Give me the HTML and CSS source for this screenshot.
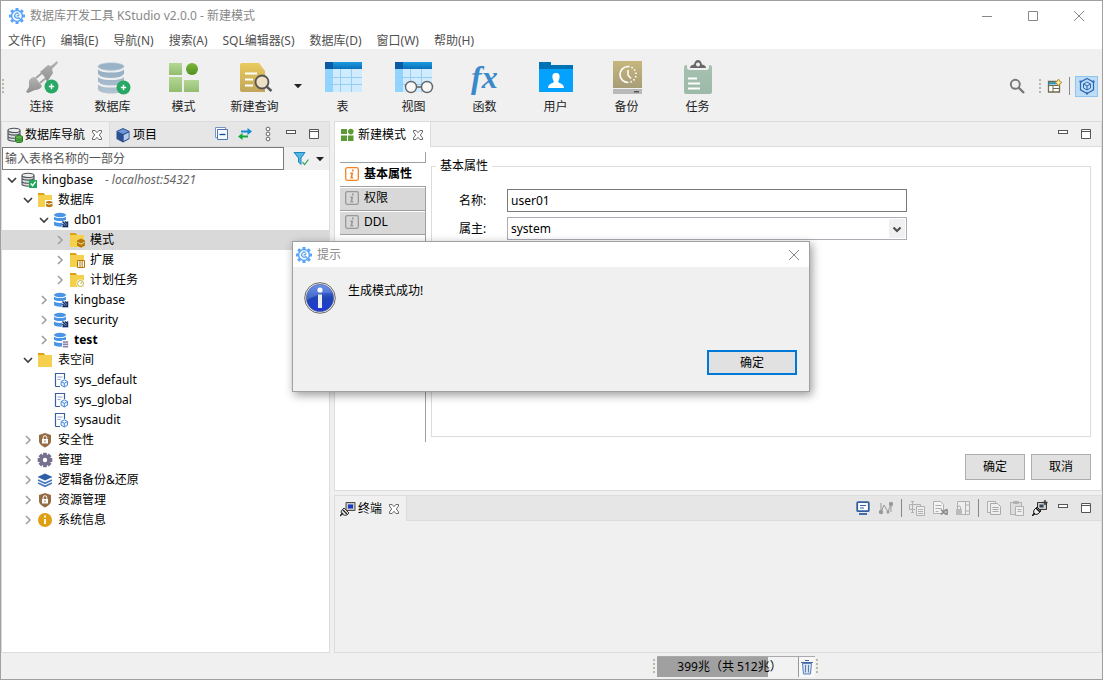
FILE: index.html
```
<!DOCTYPE html>
<html lang="zh-CN">
<head>
<meta charset="utf-8">
<meta name="viewport" content="width=device-width, initial-scale=1">
<title>数据库开发工具 KStudio v2.0.0 - 新建模式</title>
<link rel="stylesheet" href="styles.css">
</head>
<body>
<svg class="defs" aria-hidden="true">
  <defs>
    <linearGradient id="g-gray" x1="0" y1="0" x2="0" y2="1"><stop offset="0" stop-color="#b4b4b4"/><stop offset="1" stop-color="#8f8f8f"/></linearGradient>
    <linearGradient id="g-db" x1="0" y1="0" x2="0" y2="1"><stop offset="0" stop-color="#8eaac0"/><stop offset="1" stop-color="#b4c3d2"/></linearGradient>
    <linearGradient id="g-green" x1="0" y1="0" x2="0" y2="1"><stop offset="0" stop-color="#b5d795"/><stop offset="1" stop-color="#92bd70"/></linearGradient>
    <linearGradient id="g-leaf" x1="0" y1="0" x2="0" y2="1"><stop offset="0" stop-color="#7fb83c"/><stop offset="1" stop-color="#4f9020"/></linearGradient>
    <linearGradient id="g-doc" x1="0" y1="0" x2="0" y2="1"><stop offset="0" stop-color="#e9ca5c"/><stop offset="1" stop-color="#c2a55a"/></linearGradient>
    <linearGradient id="g-head" x1="0" y1="0" x2="0" y2="1"><stop offset="0" stop-color="#1b9be0"/><stop offset="1" stop-color="#0a6fb8"/></linearGradient>
    <linearGradient id="g-safe" x1="0" y1="0" x2="0" y2="1"><stop offset="0" stop-color="#c6b77c"/><stop offset="1" stop-color="#a79d77"/></linearGradient>
    <linearGradient id="g-task" x1="0" y1="0" x2="0" y2="1"><stop offset="0" stop-color="#a6c1b0"/><stop offset="1" stop-color="#9db9a8"/></linearGradient>
    <linearGradient id="g-info" x1="0" y1="0" x2="0" y2="1"><stop offset="0" stop-color="#5f87e6"/><stop offset=".5" stop-color="#1f45b4"/><stop offset="1" stop-color="#2038d8"/></linearGradient>
  </defs>
  <symbol id="gear" viewBox="0 0 16 16">
    <circle cx="8" cy="8" r="5.400" fill="none" stroke="#5aa4f8" stroke-width="1.500"/>
    <path d="M8 0v2.600M8 13.400v2.600M0 8h2.600M13.400 8H16M2.200 2.200l1.900 1.900M11.900 11.900l1.900 1.900M13.800 2.200l-1.900 1.900M4.100 11.900l-1.900 1.900" stroke="#5aa4f8" stroke-width="3"/>
    <path d="M9.600 5.600a2.500 2.500 0 1 0 .6 3.600M7.600 7.600a1.600 1.600 0 0 0 2.400-1.400M9.200 9.200l4.200 4.200" fill="none" stroke="#5aa4f8" stroke-width="1.300"/>
  </symbol>
  <symbol id="plus" viewBox="0 0 14 14"><circle cx="7" cy="7" r="6.500" fill="#27a866"/><path d="M7 4.500v5M4.500 7h5" stroke="#fff" stroke-width="1.300"/></symbol>
  <symbol id="close" viewBox="0 0 12 12"><path d="M1.500 1.500h2.600L6 3.700l1.900-2.200h2.600v1.600L8.300 6l2.200 2.900v1.600H7.900L6 8.300l-1.900 2.200H1.500V8.900L3.700 6 1.500 3.100z" fill="#fff" stroke="#5a5a5a" stroke-width=".9"/></symbol>
  <symbol id="min" viewBox="0 0 16 16"><rect x="3.500" y="4.500" width="9" height="3" fill="#fff" stroke="#555"/></symbol>
  <symbol id="max" viewBox="0 0 16 16"><path d="M3.500 3.500h9v9h-9zM3.500 5.500h9" fill="#fff" stroke="#555"/></symbol>
  <symbol id="down" viewBox="0 0 16 16"><path d="M4 6h8l-4 4.200z" fill="#222"/></symbol>
  <symbol id="open" viewBox="0 0 16 16"><path d="M4 6l4 4 4-4" fill="none" stroke="#404040" stroke-width="1.700"/></symbol>
  <symbol id="shut" viewBox="0 0 16 16"><path d="M6 4l4 4-4 4" fill="none" stroke="#a0a0a0" stroke-width="1.600"/></symbol>
  <symbol id="blocks" viewBox="0 0 16 16"><path d="M1 2h6v5H1zM1 8.500h6V14H1zM8 8.500h5.500V14H8z" fill="#5d9a35"/><circle cx="10.800" cy="4.600" r="2.800" fill="#5d9a35"/></symbol>
  <symbol id="stack" viewBox="0 0 16 16"><g fill="#4a94e6"><ellipse cx="7" cy="3" rx="6" ry="2.200"/><path d="M1 4.800c2 1.700 10 1.700 12 0v3c-2 1.700-10 1.700-12 0z"/><path d="M1 9.600c2 1.700 10 1.700 12 0v3.600c-2 1.900-10 1.900-12 0z"/></g></symbol>
  <symbol id="dbarrow" viewBox="0 0 16 16"><use href="#stack"/><rect x="9" y="9" width="7" height="7" fill="#dfe8f5"/><path d="M9.500 9.500l4 4M14.500 9.500v5h-5M12 9.500l2 2M9.500 12l2 2" fill="none" stroke="#172d63" stroke-width="1.300"/></symbol>
  <symbol id="dbstop" viewBox="0 0 16 16"><use href="#stack"/><path d="M9 8h7v8H9z" fill="#fff"/><path d="M9.800 10h5.400M9.800 12.400h5.400M9.800 14.800h5.400" stroke="#8681a5" stroke-width="1.600"/></symbol>
  <symbol id="server" viewBox="0 0 16 16"><g fill="#d9dcde" stroke="#50555a" stroke-width="1.100"><path d="M1 3.500v9.200c2 2 10 2 12 0V3.500"/><ellipse cx="7" cy="3.400" rx="6" ry="2.100" fill="#eee"/><path d="M1 6.600c2 2 10 2 12 0M1 9.800c2 2 10 2 12 0" fill="none"/></g></symbol>
  <symbol id="serverok" viewBox="0 0 16 16"><use href="#server"/><rect x="8" y="8" width="8" height="8" fill="#20a75a"/><path d="M9.800 11.500l1.800 2.200 3-4" stroke="#fff" stroke-width="1.300" fill="none"/></symbol>
  <symbol id="servernav" viewBox="0 0 16 16"><use href="#server"/><path d="M8.500 9.500c1-1.300 6-1.300 7 0v5c-1 1.500-6 1.500-7 0z" fill="#5fb54a" stroke="#2c7a2a"/><path d="M8.500 11.500q3.500 1.600 7 0M8.500 13.200q3.500 1.600 7 0" fill="none" stroke="#2c7a2a" stroke-width=".8"/></symbol>
  <symbol id="folder" viewBox="0 0 16 16"><path d="M1 1h5.500l1.500 2h7v12H1z" fill="#f5d04c"/><path d="M1 1h5.500l1.500 2H1z" fill="#dca010"/></symbol>
  <symbol id="folderdb" viewBox="0 0 16 16"><use href="#folder"/><path d="M8 8h8v8H8z" fill="#fff"/><path d="M9 10c1-1.500 5.500-1.500 6.500 0v4c-1 1.500-5.500 1.500-6.500 0z" fill="#b87808"/><path d="M9 11.300q3 1.800 6.500 0" fill="none" stroke="#fff"/></symbol>
  <symbol id="foldercube" viewBox="0 0 16 16"><use href="#folder"/><path d="M12 6.500l4 2v5l-4 2.200-4-2.200v-5z" fill="#b87808"/><path d="M8.500 10.200l3.500 2 3.500-2" fill="none" stroke="#f4dfa5"/></symbol>
  <symbol id="foldergrid" viewBox="0 0 16 16"><use href="#folder"/><path d="M8.500 8.500h7v7h-7zM11 8.500v7M13.200 8.500v7" fill="#fff" stroke="#b87808"/></symbol>
  <symbol id="folderclock" viewBox="0 0 16 16"><use href="#folder"/><circle cx="11.500" cy="11.500" r="4" fill="#fff"/><circle cx="11.500" cy="11.500" r="3" fill="#fff" stroke="#b9b33d"/><path d="M11.500 12l1.500-2" stroke="#b9b33d"/></symbol>
  <symbol id="space" viewBox="0 0 16 16"><path d="M2.500 14.500v-13h9V7M2.500 14.500H7" fill="none" stroke="#3b5f9e" stroke-width="1.200"/><path d="M4.500 5h5M4.500 7.500h3" stroke="#8ea5cc"/><path d="M11.300 7.800l3.200 1.700v3.700l-3.200 1.800-3.200-1.800V9.500zM8.100 9.500l3.200 1.800 3.200-1.800M11.300 11.300V15" fill="#eaf3ff" stroke="#4a8ad8"/></symbol>
  <symbol id="shield" viewBox="0 0 16 16"><path d="M8 1l6 2v6c0 3-3 5-6 6.500C5 14 2 12 2 9V3z" fill="#946b43"/><rect x="5" y="7" width="6" height="4.500" fill="#fff"/><path d="M6.200 7V5.500a1.800 1.800 0 0 1 3.600 0V7M8 8.300v2" fill="none" stroke="#fff"/><path d="M8 8.300v2" stroke="#946b43"/></symbol>
  <symbol id="cog" viewBox="0 0 16 16"><circle cx="8" cy="8" r="4" fill="none" stroke="#77718f" stroke-width="3.600"/><path d="M8 .7v3M8 12.300v3M.7 8h3M12.300 8h3M2.800 2.800l2 2M11.200 11.200l2 2M13.200 2.800l-2 2M4.800 11.200l-2 2" stroke="#77718f" stroke-width="3.800"/></symbol>
  <symbol id="layers" viewBox="0 0 16 16"><path d="M8 1.500L15.500 5 8 8.500.5 5z" fill="#2e5ea7"/><path d="M1 8l7 3.300L15 8M1 11l7 3.300 7-3.300" fill="none" stroke="#4878bd" stroke-width="1.500"/></symbol>
  <symbol id="notice" viewBox="0 0 16 16"><circle cx="8" cy="8" r="7" fill="#e0a014"/><path d="M8 7v5M8 3.600v2" stroke="#fff" stroke-width="1.800"/></symbol>
  <symbol id="page-i" viewBox="0 0 16 16"><rect x="1.700" y="1.700" width="12.600" height="12.600" rx="1.500" fill="none" stroke="currentColor" stroke-width="1.300"/><path d="M9 3.500l-.4 1.800M6.300 7.200h2l-1 4.600h1.800" fill="none" stroke="currentColor" stroke-width="1.600"/></symbol>
  <symbol id="cube" viewBox="0 0 16 16"><path d="M8 1l6.500 3v8L8 15.500 1.500 12V4z" fill="#2b4f91"/><path d="M8 2l5.500 2.500L8 7 2.500 4.500z" fill="#6f97d4"/><path d="M8.700 8l5-2.500v5.800l-5 2.800z" fill="#b8cdec"/></symbol>
  <symbol id="plugterm" viewBox="0 0 16 16"><path d="M6 1.500h9v8H6z" fill="#c8c8bd" stroke="#4c4c4c"/><path d="M8 3.500h5v4H8z" fill="#1739c9"/><path d="M2 9l2-2 5 5-2 2q-3 1-5-1t0-4z" fill="#eee" stroke="#333"/><path d="M0 15l3-3M3 9l4 4" stroke="#222" stroke-width="1.300"/></symbol>
</svg>

<div class="window">
  <header class="titlebar">
    <svg class="i16"><use href="#gear"/></svg>
    <h1>数据库开发工具 KStudio v2.0.0 - 新建模式</h1>
    <div class="winbtns">
      <button aria-label="最小化"><svg class="i16" viewBox="0 0 16 16"><path d="M3 8.500h10" stroke="#888"/></svg></button>
      <button aria-label="最大化"><svg class="i16" viewBox="0 0 16 16"><path d="M3.500 3.500h9v9h-9z" fill="none" stroke="#888"/></svg></button>
      <button aria-label="关闭"><svg class="i16" viewBox="0 0 16 16"><path d="M3 3l10 10M13 3L3 13" stroke="#888"/></svg></button>
    </div>
  </header>
  <nav class="menubar">
    <button>文件(F)</button><button>编辑(E)</button><button>导航(N)</button><button>搜索(A)</button><button>SQL编辑器(S)</button><button>数据库(D)</button><button>窗口(W)</button><button>帮助(H)</button>
  </nav>

  <div class="toolbar">
    <span class="grip"></span>
    <button class="tool"><svg class="i40" viewBox="0 0 40 40"><g fill="url(#g-gray)"><path d="M18 14l8-7 3 1 6-5 1 2-6 6 1 4-6 9q-2-6-7-10z"/><path d="M7 23q2-4 6-4l7 9q-2 4-7 4l-7 3-2-1 3-5z"/></g><path d="M14 20l6-5M18 25l6-5" stroke="#a2a2a2" stroke-width="2"/><use href="#plus" x="22" y="21" width="15" height="15"/></svg><span>连接</span></button>
    <button class="tool"><svg class="i40" viewBox="0 0 40 40"><path d="M5 8v23c0 6 26 6 26 0V8z" fill="url(#g-db)"/><path d="M5 9c0 6 26 6 26 0M5 16.500c0 6 26 6 26 0M5 24c0 6 26 6 26 0" fill="none" stroke="#f0f0f0" stroke-width="2"/><ellipse cx="18" cy="8.500" rx="13" ry="3.800" fill="#9ab2c6" stroke="#c5d2dd" stroke-width=".6"/><use href="#plus" x="23" y="22" width="15" height="15"/></svg><span>数据库</span></button>
    <button class="tool"><svg class="i40" viewBox="0 0 40 40"><path d="M5 5h13v12H5z" fill="url(#g-green)"/><path d="M5 19h13v15H5z" fill="url(#g-green)"/><path d="M20 22h15v12H20z" fill="url(#g-green)"/><circle cx="28" cy="11" r="6" fill="url(#g-leaf)"/></svg><span>模式</span></button>
    <button class="tool"><svg class="i40" viewBox="0 0 40 40"><path d="M7 5h17l6 8v21H7q-2 0-2-2V7q0-2 2-2z" fill="url(#g-doc)"/><path d="M10 15.500h12M10 21.500h8M10 27.500h8" stroke="#fff" stroke-width="2"/><circle cx="27" cy="24" r="6.500" fill="#eee0c4" stroke="#555" stroke-width="1.800"/><path d="M31.500 28.500l5 4.500" stroke="#555" stroke-width="2.400"/></svg><span>新建查询</span></button>
    <button class="more" aria-label="更多查询"><svg class="i16"><use href="#down"/></svg></button>
    <button class="tool"><svg class="i40" viewBox="0 0 40 40"><path d="M2 11h37v23H2z" fill="#d0ebfe"/><path d="M2 11h8v23H2z" fill="#91d4fe"/><path d="M2 4h37v7H2z" fill="url(#g-head)"/><path d="M2 4h8v7H2z" fill="#0a5ba2"/><path d="M17.500 11v23M28.500 11v23M2 19.500h37M2 26.500h37" stroke="#94cdf0"/></svg><span>表</span></button>
    <button class="tool"><svg class="i40" viewBox="0 0 40 40"><path d="M1 11h37v23H1z" fill="#d0ebfe"/><path d="M1 11h8v23H1z" fill="#91d4fe"/><path d="M1 4h37v7H1z" fill="url(#g-head)"/><path d="M1 4h8v7H1z" fill="#0a5ba2"/><path d="M16.500 11v23M27.500 11v23M1 19.500h37M1 26.500h37" stroke="#94cdf0"/><path d="M22 29h6" stroke="#666" stroke-width="1.600"/><circle cx="17" cy="29" r="5.500" fill="#f7f7f7" stroke="#666" stroke-width="1.400"/><circle cx="33" cy="29" r="5.500" fill="#f7f7f7" stroke="#666" stroke-width="1.400"/></svg><span>视图</span></button>
    <button class="tool"><svg class="i40" viewBox="0 0 40 40"><text class="fx" x="6" y="30">fx</text></svg><span>函数</span></button>
    <button class="tool"><svg class="i40" viewBox="0 0 40 40"><path d="M3 4h12v3h22v6H3z" fill="#0073b4"/><path d="M3 11h34v23H3z" fill="#04a2fd"/><path d="M20 15c3 0 4 2 3.500 5-.3 2-1.300 2.500-1.300 4 1 1.500 5.800 1.500 5.800 6H12c0-4.500 4.800-4.500 5.800-6 0-1.500-1-2-1.300-4-.5-3 .5-5 3.500-5z" fill="#fff"/></svg><span>用户</span></button>
    <button class="tool"><svg class="i40" viewBox="0 0 40 40"><path d="M6 3h29v27H6z" fill="url(#g-safe)"/><path d="M6 31h29v5H6z" fill="#b9b9b9"/><path d="M27 33h5v1.500h-5z" fill="#5b5649"/><path d="M21 8.500a8 8 0 0 0 0 16" fill="none" stroke="#fff" stroke-width="1.600"/><path d="M21 8.500a8 8 0 0 1 0 16" fill="none" stroke="#fff" stroke-width="1.600" stroke-dasharray="1.500 2"/><path d="M21 12v5l3 3.500" fill="none" stroke="#fff" stroke-width="1.500"/></svg><span>备份</span></button>
    <button class="tool"><svg class="i40" viewBox="0 0 40 40"><path d="M6 9q0-2 3-2v2q0 3 3 3h16q3 0 3-3V7q3 0 3 2v25q0 2-2 2H8q-2 0-2-2z" fill="url(#g-task)"/><path d="M12 10q0-3 4-3.500Q17 2 20 2t4 4.500q4 .5 4 3.500z" fill="#686868"/><circle cx="20" cy="6.500" r="2" fill="#f0f0f0"/><path d="M10 20.500h9M10 25.500h12M10 30.500h12" stroke="#fff" stroke-width="2"/></svg><span>任务</span></button>
    <div class="quick">
      <button class="search" aria-label="搜索"><svg class="i16" viewBox="0 0 16 16"><circle cx="6.300" cy="6.300" r="4.500" fill="none" stroke="#777" stroke-width="1.900"/><path d="M9.500 9.500l5.500 5.500" stroke="#777" stroke-width="2.400"/></svg></button>
      <span class="grip"></span>
      <button aria-label="打开透视图"><svg class="i16" viewBox="0 0 16 16"><path d="M1.500 3.500h11v10.500h-11z" fill="#fff" stroke="#716a50" stroke-width="1.300"/><path d="M2 4h8v2.500H2z" fill="#2e9bc6"/><path d="M2 7.500h11M6 7.500V14M6 10.500h7" stroke="#716a50" fill="none"/><path d="M11.500 1l1.200 2.300L15 4.500l-2.300 1.200L11.500 8l-1.200-2.300L8 4.500l2.300-1.200z" fill="#fff3b0" stroke="#c28e22"/></svg></button>
      <span class="vline"></span>
      <button class="persp" aria-label="数据库透视图"><svg class="i18" viewBox="0 0 18 18"><path d="M9 1.500l6.500 3.700v7.600L9 16.500l-6.500-3.700V5.200z" fill="none" stroke="#2b69b5" stroke-width="1.200"/><path d="M9 5l3.500 2v4L9 13l-3.500-2V7zM5.500 7L9 9l3.500-2M9 9v4" fill="#bddcf6" stroke="#2b69b5"/><path d="M1.500 4.500h2M14.500 4.500h2M8 16.500h2" stroke="#2b69b5" stroke-width="2"/></svg></button>
    </div>
  </div>

  <main class="workbench">
    <section class="panel nav">
      <div class="tabs">
        <div class="tab gray on"><svg class="i16"><use href="#servernav"/></svg><span>数据库导航</span><button aria-label="关闭"><svg class="i12"><use href="#close"/></svg></button></div>
        <div class="tab plain"><svg class="i16"><use href="#cube"/></svg><span>项目</span></div>
        <div class="actions">
          <button aria-label="全部折叠"><svg class="i16" viewBox="0 0 16 16"><path d="M1.500 1.500h10v10h-10z" fill="#fff" stroke="#7894bc"/><path d="M3.500 3.500h10v10h-10z" fill="#f5faff" stroke="#4b78b0"/><path d="M5.500 8.500h6" stroke="#144d90" stroke-width="1.300"/></svg></button>
          <button aria-label="链接编辑器"><svg class="i16" viewBox="0 0 16 16"><path d="M4 5.500h7" stroke="#148ad0" stroke-width="2"/><path d="M10.500 2l4.500 3.500-4.500 3.500z" fill="#148ad0"/><path d="M5 10.500h6" stroke="#13aa3b" stroke-width="2"/><path d="M5.500 7L1 10.500 5.500 14z" fill="#13aa3b"/></svg></button>
          <button aria-label="视图菜单"><svg class="i16" viewBox="0 0 16 16"><g fill="#fff" stroke="#666"><circle cx="8" cy="3" r="1.900"/><circle cx="8" cy="8" r="1.900"/><circle cx="8" cy="13" r="1.900"/></g></svg></button>
          <button aria-label="最小化"><svg class="i16"><use href="#min"/></svg></button>
          <button aria-label="最大化"><svg class="i16"><use href="#max"/></svg></button>
        </div>
      </div>
      <div class="filter">
        <input type="text" aria-label="过滤" placeholder="输入表格名称的一部分">
        <button aria-label="过滤器"><svg class="i16" viewBox="0 0 16 16"><path d="M1 1.500h11L8 7v6.500L5.500 11V7z" fill="#55b5e8" stroke="#1c86bd"/><path d="M9.500 11l2 2.500 4-5" fill="none" stroke="#24a04c" stroke-width="1.200"/></svg></button>
        <button aria-label="过滤器菜单"><svg class="i16"><use href="#down"/></svg></button>
      </div>
      <ul class="tree">
        <li class="l0"><svg class="i16"><use href="#open"/></svg><svg class="i16"><use href="#serverok"/></svg><span>kingbase</span><em>- localhost:54321</em></li>
        <li class="l1"><svg class="i16"><use href="#open"/></svg><svg class="i16"><use href="#folderdb"/></svg><span>数据库</span></li>
        <li class="l2"><svg class="i16"><use href="#open"/></svg><svg class="i16"><use href="#dbarrow"/></svg><span>db01</span></li>
        <li class="l3 selected"><svg class="i16"><use href="#shut"/></svg><svg class="i16"><use href="#foldercube"/></svg><span>模式</span></li>
        <li class="l3"><svg class="i16"><use href="#shut"/></svg><svg class="i16"><use href="#foldergrid"/></svg><span>扩展</span></li>
        <li class="l3"><svg class="i16"><use href="#shut"/></svg><svg class="i16"><use href="#folderclock"/></svg><span>计划任务</span></li>
        <li class="l2"><svg class="i16"><use href="#shut"/></svg><svg class="i16"><use href="#dbarrow"/></svg><span>kingbase</span></li>
        <li class="l2"><svg class="i16"><use href="#shut"/></svg><svg class="i16"><use href="#dbarrow"/></svg><span>security</span></li>
        <li class="l2"><svg class="i16"><use href="#shut"/></svg><svg class="i16"><use href="#dbstop"/></svg><strong>test</strong></li>
        <li class="l1"><svg class="i16"><use href="#open"/></svg><svg class="i16"><use href="#folder"/></svg><span>表空间</span></li>
        <li class="l2"><svg class="i16"></svg><svg class="i16"><use href="#space"/></svg><span>sys_default</span></li>
        <li class="l2"><svg class="i16"></svg><svg class="i16"><use href="#space"/></svg><span>sys_global</span></li>
        <li class="l2"><svg class="i16"></svg><svg class="i16"><use href="#space"/></svg><span>sysaudit</span></li>
        <li class="l1"><svg class="i16"><use href="#shut"/></svg><svg class="i16"><use href="#shield"/></svg><span>安全性</span></li>
        <li class="l1"><svg class="i16"><use href="#shut"/></svg><svg class="i16"><use href="#cog"/></svg><span>管理</span></li>
        <li class="l1"><svg class="i16"><use href="#shut"/></svg><svg class="i16"><use href="#layers"/></svg><span>逻辑备份&amp;还原</span></li>
        <li class="l1"><svg class="i16"><use href="#shut"/></svg><svg class="i16"><use href="#shield"/></svg><span>资源管理</span></li>
        <li class="l1"><svg class="i16"><use href="#shut"/></svg><svg class="i16"><use href="#notice"/></svg><span>系统信息</span></li>
      </ul>
    </section>

    <div class="right">
      <section class="panel editor">
        <div class="tabs light">
          <div class="tab white on"><svg class="i16"><use href="#blocks"/></svg><span>新建模式</span><button aria-label="关闭"><svg class="i12"><use href="#close"/></svg></button></div>
          <div class="actions">
            <button aria-label="最小化"><svg class="i16"><use href="#min"/></svg></button>
            <button aria-label="最大化"><svg class="i16"><use href="#max"/></svg></button>
          </div>
        </div>
        <div class="editor-body">
          <div class="pages">
            <button class="page active"><svg class="i16"><use href="#page-i"/></svg><span>基本属性</span></button>
            <button class="page"><svg class="i16"><use href="#page-i"/></svg><span>权限</span></button>
            <button class="page"><svg class="i16"><use href="#page-i"/></svg><span>DDL</span></button>
            <div class="rest"></div>
          </div>
          <fieldset>
            <legend>基本属性</legend>
            <div class="form">
              <label for="name">名称:</label><input id="name" type="text" value="user01">
              <label for="owner">属主:</label>
              <div class="combo"><select id="owner"><option>system</option></select><span class="knob"><svg class="i16" viewBox="0 0 16 16"><path d="M4.500 6.500L8 10l3.500-3.500" fill="none" stroke="#505050" stroke-width="2.200"/></svg></span></div>
            </div>
          </fieldset>
        </div>
        <div class="buttons"><button class="btn">确定</button><button class="btn">取消</button></div>
      </section>

      <section class="panel terminal">
        <div class="tabs">
          <div class="tab gray on"><svg class="i16"><use href="#plugterm"/></svg><span>终端</span><button aria-label="关闭"><svg class="i12"><use href="#close"/></svg></button></div>
          <div class="actions">
            <button aria-label="打开终端"><svg class="i16" viewBox="0 0 16 16"><rect x="2.200" y="2.200" width="11.600" height="9" rx="1" fill="#fff" stroke="#315f9f" stroke-width="1.800"/><path d="M5 5.500h6M5 8h4" stroke="#315f9f"/><path d="M4 14h8" stroke="#315f9f" stroke-width="1.800"/></svg></button>
            <button aria-label="断开"><svg class="i16" viewBox="0 0 16 16"><path d="M3 3v9l3-7 4 7 3-8v8" fill="none" stroke="#999"/><circle cx="3" cy="12" r="2.200" fill="#999"/><circle cx="13" cy="4" r="2.200" fill="#999"/><circle cx="10" cy="12" r="1.500" fill="#999"/></svg></button>
            <span class="vline"></span>
            <button aria-label="命令输入"><svg class="i16" viewBox="0 0 16 16"><path d="M2 1.500h3M3.500 1.500v11M2 12.500h3M.5 4.500h11v2M.5 4.500v5H6" stroke="#b0b0b0" fill="none"/><path d="M7.500 6.500h8v9h-8zM9 9.500h5M9 11.500h5M9 13.500h5" fill="#eee" stroke="#b0b0b0"/></svg></button>
            <button aria-label="清除"><svg class="i16" viewBox="0 0 16 16"><path d="M1.500 1.500h7l3 3v9h-10zM3.500 5.500h6M3.500 8.500h6M3.500 11.500h3" fill="#f3f3f3" stroke="#b0b0b0"/><path d="M9 9.500l5 5M14 9.500l-5 5M15 9v6" stroke="#888" stroke-width="1.600"/></svg></button>
            <button aria-label="滚动锁定"><svg class="i16" viewBox="0 0 16 16"><path d="M2.500 1.500h12v13h-12zM10.500 1.500v13M10.500 5h4M10.500 11h4" fill="#eee" stroke="#b0b0b0"/><path d="M1 9h6v6H1z" fill="#bbb"/><path d="M2.500 9V7.500a1.500 1.500 0 0 1 3 0V9" fill="none" stroke="#aaa"/></svg></button>
            <span class="vline"></span>
            <button aria-label="复制"><svg class="i16" viewBox="0 0 16 16"><path d="M1.500 1.500h8v11h-8z" fill="#eee" stroke="#b0b0b0"/><path d="M4.500 3.500h7l3 3v8h-10zM6.500 7.500h6M6.500 9.500h6M6.500 11.500h6" fill="#eee" stroke="#aaa"/></svg></button>
            <button aria-label="粘贴"><svg class="i16" viewBox="0 0 16 16"><path d="M1.500 2.500h11v12h-11zM4.500 1.500h5v2h-5z" fill="#ddd" stroke="#b0b0b0"/><path d="M6.500 6.500h8v9h-8zM8.500 9.500h4M8.500 11.500h4" fill="#eee" stroke="#b0b0b0"/></svg></button>
            <button aria-label="新终端"><svg class="i16" viewBox="0 0 16 16"><path d="M5.500 2.500h9v7h-9z" fill="#ccc" stroke="#333"/><path d="M7.500 4.500h4v3h-4z" fill="#345"/><path d="M13 0v5M10.500 2.500h5" stroke="#333" stroke-width="1.400"/><path d="M2 10l3-3 4 4-3 3q-3 1-4 0t0-4z" fill="#eee" stroke="#222"/><path d="M0 16l3-3M4 8l4 4" stroke="#111" stroke-width="1.500"/></svg></button>
            <button aria-label="最小化"><svg class="i16"><use href="#min"/></svg></button>
            <button aria-label="最大化"><svg class="i16"><use href="#max"/></svg></button>
          </div>
        </div>
      </section>
    </div>
  </main>

  <footer class="status">
    <span class="grip"></span>
    <div class="heap"><div class="used" style="width:79%"></div><span>399兆（共 512兆）</span></div>
    <button class="trash" aria-label="运行垃圾回收"><svg class="i16" viewBox="0 0 16 16"><path d="M3.500 4.500h9l-1 10.500h-7z" fill="#d5e3f5" stroke="#5b7fb3"/><path d="M2 3.500h12M6 1.500h4" stroke="#44689e" stroke-width="1.200"/><path d="M6.500 6v7.500M9.500 6v7.500" stroke="#5b7fb3"/></svg></button>
    <span class="grip"></span>
  </footer>
</div>

<div class="dialog" role="dialog" aria-labelledby="dlg-title">
  <div class="dlg-head"><svg class="i16"><use href="#gear"/></svg><h2 id="dlg-title">提示</h2><button aria-label="关闭"><svg class="i16" viewBox="0 0 16 16"><path d="M3 3l10 10M13 3L3 13" stroke="#888"/></svg></button></div>
  <div class="dlg-body">
    <svg class="i32" viewBox="0 0 32 32"><circle cx="16" cy="16" r="15.300" fill="#f4f4f4" stroke="#666"/><circle cx="16" cy="16" r="13.700" fill="url(#g-info)" stroke="#5a668a" stroke-width=".6"/><path d="M3 15C3 7 9 3 16 3c6 0 10 3 12 8-9-1-17 3-25 7z" fill="#7fa0ee" opacity=".4"/><circle cx="16" cy="8" r="2.600" fill="#fff"/><path d="M14 12.500h4V26h-4z" fill="#eee"/></svg>
    <p>生成模式成功!</p>
  </div>
  <div class="dlg-foot"><button class="btn primary">确定</button></div>
</div>
</body>
</html>
```
FILE: styles.css
```
* { box-sizing: border-box; }
html, body { margin: 0; height: 100%; }
body {
  font: 12px/16px "Noto Sans", "Noto Sans CJK SC", sans-serif;
  color: #000;
  background: #f0f0f0;
  position: relative;
}
button, input, select { font: inherit; color: inherit; }
button { border: 0; padding: 0; background: none; }
h1, h2, p, ul { margin: 0; padding: 0; font-size: 12px; font-weight: 400; }
svg { display: block; flex: none; }
.defs { position: absolute; width: 0; height: 0; }
.i12 { width: 12px; height: 12px; }
.i16 { width: 16px; height: 16px; }
.i18 { width: 18px; height: 18px; }
.i32 { width: 32px; height: 32px; }
.i40 { width: 40px; height: 40px; }

.window {
  min-height: 100vh;
  display: flex;
  flex-direction: column;
  border: 1px solid #a0a0a0;
}
.titlebar {
  display: flex;
  align-items: center;
  gap: 5px;
  height: 29px;
  padding-left: 8px;
  background: #fff;
  color: #888;
}
.winbtns { display: flex; margin-left: auto; }
.winbtns button { width: 46px; display: grid; place-items: center; }
.menubar { display: flex; gap: 1px; height: 19px; padding-top: 2px; background: #fff; color: #505050; }
.menubar button { padding: 0 7px; }

.toolbar {
  display: flex;
  align-items: center;
  height: 72px;
  padding-top: 2px;
}
.grip {
  width: 2px;
  height: 14px;
  margin: 0 1px;
  background: repeating-linear-gradient(#bdb5a8 0 2px, transparent 2px 4px);
}
.tool {
  width: 71px;
  display: flex;
  flex-direction: column;
  align-items: center;
  gap: 1px;
  margin-top: 1px;
  white-space: nowrap;
  color: #222;
}
.toolbar > .grip { margin-right: 2px; }
.more { width: 17px; }
.fx { font: italic bold 32px/32px "Liberation Serif", serif; fill: #3a89c9; }
.quick { display: flex; align-items: center; margin-left: auto; padding-right: 4px; }
.quick .search { margin-right: 13px; }
.quick .grip { margin-right: 6px; }
.vline { width: 1px; height: 18px; margin: 0 3px 0 4px; background: #888; }
.quick .vline { margin: 0 5px 0 6px; }
.persp {
  display: grid;
  place-items: center;
  width: 23px;
  height: 21px;
  background: #bddcf6;
  border: 1px solid #90c4f0;
}

.workbench {
  flex: 1;
  display: grid;
  grid-template-columns: 329px 1fr;
  gap: 4px;
}
.right { display: grid; grid-template-rows: 370fr 158fr; gap: 4px; min-width: 0; }
.panel { border: 1px solid #dcdcdc; display: flex; flex-direction: column; min-width: 0; }
.nav, .editor { background: #fff; }
.tabs {
  display: flex;
  height: 25px;
  background: #e6e6e6;
  border-bottom: 1px solid #dcdcdc;
}
.tabs.light { background: #f0f0f0; }
.tab { display: flex; align-items: center; gap: 2px; padding: 1px 6px 0 5px; white-space: nowrap; }
.tab.on { height: 25px; border-right: 1px solid #dcdcdc; }
.tab.gray { background: #f0f0f0; }
.tab.white { background: #fff; }
.tab button { margin-left: 4px; }
.actions { display: flex; align-items: center; margin-left: auto; padding-right: 4px; }
.actions button { width: 23px; display: grid; place-items: center; }
.filter { display: flex; align-items: center; background: #f0f0f0; padding-right: 1px; }
.filter input {
  flex: 1;
  min-width: 0;
  height: 23px;
  margin-right: 9px;
  padding: 0 2px;
  border: 1px solid #7a7a7a;
  background: #fff;
}
.filter input::placeholder { color: #555; opacity: 1; }
.filter button + button { margin-left: 3px; }

.tree { list-style: none; }
.tree li { display: flex; align-items: center; height: 20px; white-space: nowrap; }
.tree svg + svg { margin: 0 5px 0 1px; }
.tree em { color: #666; margin-left: 12px; }
.l0 { padding-left: 2px; }
.l1 { padding-left: 18px; }
.l2 { padding-left: 34px; }
.l3 { padding-left: 50px; }
.selected { background: #d9d9d9; }

.editor-body { flex: 1; display: flex; gap: 5px; padding: 5px 10px 0 5px; }
.pages { width: 86px; display: flex; flex-direction: column; }
.pages::before { content: ""; height: 10px; border-right: 1px solid #a0a0a0; border-bottom: 1px solid #a0a0a0; }
.page {
  display: flex;
  align-items: center;
  gap: 4px;
  height: 24px;
  padding: 0 0 2px 4px;
  background: #d8d8d8;
  border: 1px solid #a0a0a0;
  border-width: 0 1px 1px 0;
  box-shadow: inset 0 1px #fff;
}
.page svg { color: #999; }
.page.active { background: #fff; border-right: 0; font-weight: 700; }
.page.active svg { color: #f58220; }
.rest { flex: 1; border-right: 1px solid #a0a0a0; }
fieldset { flex: 1; min-width: 0; margin: 6px 0 5px; padding: 15px 20px; border: 1px solid #dcdcdc; }
legend { margin-left: -16px; padding: 0 4px; }
.form { display: grid; grid-template-columns: 48px 400px; gap: 5px 0; align-items: center; padding-left: 7px; }
.form input, .form select {
  width: 100%;
  height: 23px;
  padding: 0 3px;
  border: 1px solid #7a7a7a;
  border-radius: 0;
  background: #fff;
}
.combo { display: grid; align-items: center; }
.combo > * { grid-area: 1 / 1; }
.form select { appearance: none; border-color: #acacb4; }
.knob {
  justify-self: end;
  display: grid;
  place-items: center;
  width: 16px;
  height: 19px;
  margin-right: 2px;
  background: #f0f0f0;
  pointer-events: none;
}
.buttons { display: flex; justify-content: flex-end; gap: 6px; padding: 12px 10px 10px; }
.btn { width: 60px; height: 26px; background: #e1e1e1; border: 1px solid #adadad; }
.btn.primary { width: 90px; height: 25px; border: 2px solid #0078d7; }

.status { display: flex; align-items: center; height: 26px; padding-left: 651px; }
.heap { display: grid; align-items: center; width: 141px; height: 21px; background: #f2f2f2; border-top: 1px solid #aaa; margin-left: 1px; }
.heap > * { grid-area: 1 / 1; }
.heap span { padding-left: 4px; text-align: center; }
.used { height: 20px; background: #a0a0a0; }
.trash { height: 21px; border-left: 1px solid #999; border-top: 1px solid #aaa; background: #f8f8f8; }

.dialog {
  position: absolute;
  top: 241px;
  left: 0;
  right: 1px;
  width: 518px;
  margin: 0 auto;
  background: #f0f0f0;
  border: 1px solid #a0a0a0;
  box-shadow: 2px 3px 9px rgba(0, 0, 0, .4);
}
.dlg-head { display: flex; align-items: center; gap: 5px; height: 25px; padding: 0 7px 0 3px; background: #fff; color: #888; }
.dlg-head button { margin-left: auto; }
.dlg-body { display: flex; gap: 12px; padding: 15px 11px; }
.dlg-body p { padding-top: 1px; }
.dlg-foot { display: flex; justify-content: flex-end; padding: 21px 12px 16px; }
```
